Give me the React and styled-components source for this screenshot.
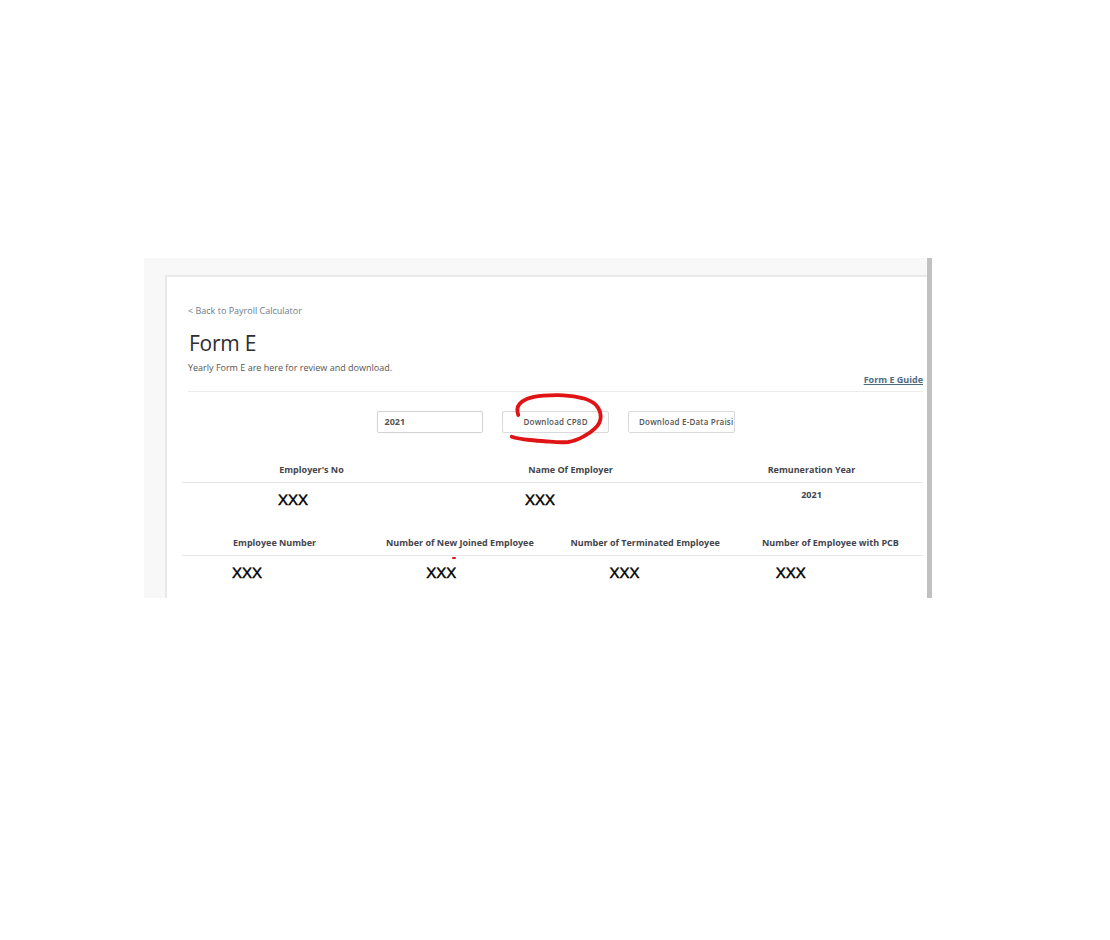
import React from "react";
import styled, { createGlobalStyle } from "styled-components";

const Global = createGlobalStyle`
  html, body { margin: 0; padding: 0; background: #fff; }
  body { font-family: "Open Sans", "Liberation Sans", sans-serif; color: #333; }
`;

const Shell = styled.div`
  display: flex;
  width: 788px;
  height: 340px;
  margin: 258px 0 0 144px;
  background: #f8f8f8;
  overflow: hidden;
`;

const Main = styled.main`
  flex: 1;
  min-width: 0;
  padding: 17px 0 0 21px;
`;

const Scrollbar = styled.div`
  flex: 0 0 5px;
  background: #c1c1c1;
`;

const Card = styled.section`
  height: 340px;
  box-sizing: border-box;
  padding: 27px 4px 0 21px;
  background: #fff;
  border-top: 2px solid #e9e9e9;
  border-left: 2px solid #e9e9e9;
`;

const Header = styled.header`
  display: flex;
  justify-content: space-between;
  align-items: flex-end;
  padding-bottom: 4px;
  border-bottom: 1px solid #ececec;
`;

const HeaderText = styled.div`
  padding-bottom: 12px;
`;

const BackLink = styled.a`
  display: block;
  font-size: 9px;
  line-height: 14px;
  color: #6a7d8c;
`;

const Title = styled.h1`
  margin: 10px 0 3px 1px;
  font-size: 21px;
  line-height: 30px;
  letter-spacing: -0.25px;
  font-weight: 500;
  color: #2d2d33;
`;

const Subtitle = styled.p`
  margin: 0;
  font-size: 9px;
  line-height: 14px;
  color: #555;
`;

const GuideLink = styled.a`
  font-size: 9px;
  line-height: 14px;
  font-weight: 700;
  color: #4d6b82;
  text-decoration: underline;
`;

const Controls = styled.div`
  position: relative;
  display: flex;
  justify-content: center;
  gap: 19px;
  margin-top: 19px;
`;

const YearField = styled.div`
  width: 106px;
  height: 22px;
  box-sizing: border-box;
  padding-left: 7px;
  border: 1px solid #d4d4d4;
  border-radius: 2px;
  box-shadow: 0 0 1px #ddd;
  font-size: 9px;
  font-weight: 700;
  line-height: 20px;
  color: #555;
`;

const DownloadButton = styled.button`
  width: 107px;
  height: 22px;
  box-sizing: border-box;
  padding: 0 0 0 ${(p) => p.$inset}px;
  border: 1px solid #d9d9d9;
  border-radius: 2px;
  background: #fff;
  font-family: inherit;
  font-size: 8px;
  font-weight: 600;
  line-height: 20px;
  letter-spacing: 0.2px;
  text-align: left;
  white-space: nowrap;
  overflow: hidden;
  color: #555;
`;

const Scribble = styled.svg`
  position: absolute;
  left: 322px;
  top: -21px;
  overflow: visible;
  pointer-events: none;
`;

const Table = styled.div`
  display: grid;
  grid-template-columns: ${(p) => p.$columns};
  margin: ${(p) => p.$top}px 0 0 -6px;
`;

const HeadCell = styled.div`
  height: 19px;
  border-bottom: 1px solid #e6e6e6;
  font-size: 9px;
  font-weight: 700;
  line-height: 14px;
  text-align: center;
  color: #44444c;
`;

const ValueCell = styled.div`
  height: ${(p) => p.$height}px;
  box-sizing: border-box;
  padding: 9px 0 0 ${(p) => p.$indent}px;
  font-family: "Liberation Sans", Arial, sans-serif;
  font-size: 15px;
  line-height: 17px;
  text-rendering: geometricPrecision;
  -webkit-text-stroke: 0.45px #000;
  color: #000;
`;

const YearCell = styled.div`
  height: 53px;
  box-sizing: border-box;
  padding-top: 5px;
  font-size: 9px;
  font-weight: 700;
  line-height: 14px;
  text-align: center;
  color: #44444c;
`;

const Tick = styled.span`
  position: absolute;
  left: 452px;
  top: 557px;
  width: 4px;
  height: 2px;
  border-radius: 1px;
  background: #e01818;
`;

const employerHeads = ["Employer's No", "Name Of Employer", "Remuneration Year"];
const countHeads = [
  "Number of New Joined Employee",
  "Number of Terminated Employee",
  "Number of Employee with PCB",
];

export default function App() {
  return (
    <>
      <Global />
      <Shell>
        <Main>
          <Card>
            <Header>
              <HeaderText>
                <BackLink>&lt; Back to Payroll Calculator</BackLink>
                <Title>Form E</Title>
                <Subtitle>Yearly Form E are here for review and download.</Subtitle>
              </HeaderText>
              <GuideLink>Form E Guide</GuideLink>
            </Header>
            <Controls>
              <YearField>2021</YearField>
              <DownloadButton $inset={21}>Download CP8D</DownloadButton>
              <DownloadButton $inset={10.5}>Download E-Data Praisi</DownloadButton>
              <Scribble width="100" height="56" viewBox="0 0 100 56" fill="none">
                <path
                  d="M8.3 25C6.5 20 7.3 16.7 9.5 14C11.5 11.5 14 10.2 16.7 9C22 7 27 6.3 33.3 5.7C40 5.2 46 5 53.3 5.3C60 5.7 67 6.6 73.3 8.3C79 10 83 12 86 15C89 18.5 90.7 22 90.7 26.7C90.7 31 88.5 35 85 38.3C81.5 41.7 77.5 44.3 73.3 46.7C68.5 49.3 63.5 51.3 58.3 52C52 52.6 46 52.2 40 51.7C33 51.2 26.5 50.8 20 50C13.5 49.3 7 48.5 1.7 46.7"
                  stroke="#e01414"
                  strokeWidth="3.8"
                  strokeLinecap="round"
                  strokeLinejoin="round"
                />
              </Scribble>
            </Controls>
            <Table $columns="259px 259px 223px" $top={30}>
              {employerHeads.map((h) => (
                <HeadCell key={h}>{h}</HeadCell>
              ))}
              <ValueCell $height={53} $indent={96}>XXX</ValueCell>
              <ValueCell $height={53} $indent={84}>XXX</ValueCell>
              <YearCell>2021</YearCell>
            </Table>
            <Table $columns="repeat(4, 185.25px)" $top={0}>
              <HeadCell>Employee Number</HeadCell>
              {countHeads.map((h) => (
                <HeadCell key={h}>{h}</HeadCell>
              ))}
              <ValueCell $height={42} $indent={50}>XXX</ValueCell>
              <ValueCell $height={42} $indent={59}>XXX</ValueCell>
              <ValueCell $height={42} $indent={57}>XXX</ValueCell>
              <ValueCell $height={42} $indent={38}>XXX</ValueCell>
            </Table>
          </Card>
        </Main>
        <Scrollbar />
      </Shell>
      <Tick />
    </>
  );
}
